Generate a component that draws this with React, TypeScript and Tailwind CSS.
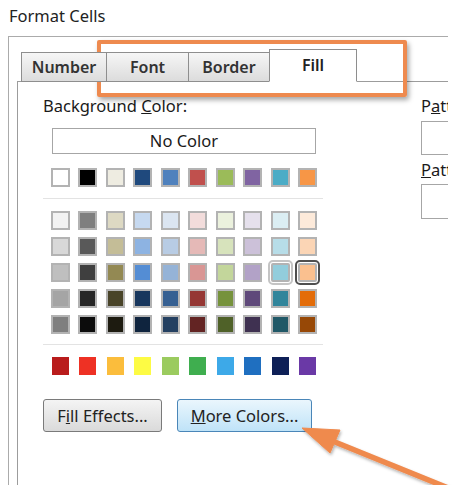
import React from "react";

const themeRow = ["#ffffff", "#000000", "#eeece1", "#1f497d", "#4f81bd", "#c0504d", "#9bbb59", "#8064a2", "#4bacc6", "#f79646"];

const tintRows = [
  ["#f2f2f2", "#7f7f7f", "#ddd9c3", "#c6d9f0", "#dbe5f1", "#f2dcdb", "#ebf1dd", "#e5e0ec", "#dbeef3", "#fdeada"],
  ["#d8d8d8", "#595959", "#c4bd97", "#8db3e2", "#b8cce4", "#e5b9b7", "#d7e3bc", "#ccc1d9", "#b7dde8", "#fbd5b5"],
  ["#bfbfbf", "#3f3f3f", "#938953", "#548dd4", "#95b3d7", "#d99694", "#c3d69b", "#b2a2c7", "#92cddc", "#fac08f"],
  ["#a5a5a5", "#262626", "#494429", "#17365d", "#366092", "#953734", "#76923c", "#5f497a", "#31859b", "#e36c09"],
  ["#7f7f7f", "#0c0c0c", "#1d1b10", "#0f243e", "#244061", "#632423", "#4f6128", "#3f3151", "#205867", "#974806"],
];

const standardRow = ["#b91c1c", "#ee3124", "#fbbd3c", "#fdfb44", "#9bcb5f", "#3fae4f", "#3da9e8", "#1f6fc0", "#0e2057", "#6a39a6"];

// hover / selected markers in the third tint row
function Swatch({ color, mark }: { color: string; mark?: "hover" | "selected" }) {
  let ring = "";
  if (mark === "hover") ring = "outline-2 outline-offset-[1px] outline-[#c4c4c4] rounded-[2px]";
  if (mark === "selected") ring = "outline-2 outline-offset-[1px] outline-[#4f4f4f] rounded-[2px]";
  return (
    <div
      className={`w-[19px] h-[19px] border-2 border-[#b3b3b3] ${ring}`}
      style={{ backgroundColor: color }}
    />
  );
}

function Tab({ label, active, className }: { label: string; active?: boolean; className: string }) {
  if (active) {
    return (
      <div className={`h-[33px] -ml-px border border-[#8e8e8e] border-b-white bg-white flex justify-center pt-[3px] text-[16px] font-semibold text-[#222] ${className}`}>
        {label}
      </div>
    );
  }
  return (
    <div className={`h-[30px] border border-[#8e8e8e] bg-gradient-to-b from-[#f6f6f6] to-[#dcdcdc] flex items-center justify-center text-[16px] font-semibold text-[#333] ${className}`}>
      {label}
    </div>
  );
}

export default function App() {
  return (
    <div className="relative w-[474px] h-[485px] overflow-hidden bg-white text-[#1a1a1a] font-['Noto_Sans','Open_Sans',sans-serif]">
      <div className="h-[36px] pl-[9px] pt-[5px] text-[16.5px] leading-[22px] text-[#222]">Format Cells</div>

      <div className="ml-[8px] w-[440px] h-[449px] border-l border-t border-[#ababab] pl-[8px] pt-[12px] overflow-hidden">
        {/* tab strip */}
        <div className="relative z-10 -mb-px ml-[4px] flex items-end h-[33px]">
          <Tab label="Number" className="w-[86px]" />
          <Tab label="Font" className="w-[83px] -ml-px" />
          <Tab label="Border" className="w-[82px] -ml-px" />
          <Tab label="Fill" active className="w-[88px]" />
        </div>

        {/* tab panel */}
        <div className="h-full border-l border-t border-[#9c9c9c] flex text-[16.5px] leading-[20px]">
          <div className="pl-[25px] pt-[14px] w-[305px] shrink-0">
            <div className="w-[280px]">
              <div>
                Background <span className="underline">C</span>olor:
              </div>
              <div className="mt-[12px] ml-[9px] w-[264px] h-[26px] border border-[#a6a6a6] flex items-center justify-center">
                No Color
              </div>

              <div className="mt-[14px] ml-[8px] w-[266px] flex justify-between">
                {themeRow.map((c, i) => (
                  <Swatch key={i} color={c} />
                ))}
              </div>

              <div className="mt-[11px] h-px bg-[#e3e3e3]" />

              <div className="mt-[12px] ml-[8px] w-[266px] flex flex-col gap-[7px]">
                {tintRows.map((row, r) => (
                  <div key={r} className="flex justify-between">
                    {row.map((c, i) => (
                      <Swatch
                        key={i}
                        color={c}
                        mark={r === 2 && i === 8 ? "hover" : r === 2 && i === 9 ? "selected" : undefined}
                      />
                    ))}
                  </div>
                ))}
              </div>

              <div className="mt-[10px] h-px bg-[#e3e3e3]" />

              <div className="mt-[12px] ml-[9px] w-[264px] flex justify-between">
                {standardRow.map((c, i) => (
                  <div key={i} className="w-[17px] h-[18px]" style={{ backgroundColor: c }} />
                ))}
              </div>

              <div className="mt-[24px] flex gap-[15px]">
                <button className="w-[119px] h-[33px] rounded-[3px] border border-[#7a7a7a] bg-gradient-to-b from-[#f4f4f4] to-[#dadada] text-[16.5px] text-[#222]">
                  F<span className="underline">i</span>ll Effects...
                </button>
                <button className="w-[135px] h-[33px] rounded-[3px] border border-[#4a86b8] bg-gradient-to-b from-[#eaf6fd] to-[#bfe3f8] text-[16.5px] text-[#222]">
                  <span className="underline">M</span>ore Colors...
                </button>
              </div>
            </div>
          </div>

          <div className="ml-[98px] pt-[14px] shrink-0 w-[80px]">
            <div className="whitespace-nowrap">
              P<span className="underline">a</span>ttern Color:
            </div>
            <div className="mt-[5px] w-[80px] h-[34px] border border-[#a6a6a6]" />
            <div className="mt-[5px] whitespace-nowrap">
              <span className="underline">P</span>attern Style:
            </div>
            <div className="mt-[4px] w-[80px] h-[35px] border border-[#a6a6a6]" />
          </div>
        </div>
      </div>

      {/* annotation: highlight around tabs */}
      <div className="absolute left-[97px] top-[40px] w-[310px] h-[57px] border-4 border-[#ee8a4f] rounded-[2px] shadow-[2px_3px_5px_rgba(0,0,0,0.35)]" />

      {/* annotation: arrow pointing at More Colors */}
      <svg className="absolute inset-0 pointer-events-none" width="474" height="485" viewBox="0 0 474 485">
        <defs>
          <filter id="sh" x="-20%" y="-20%" width="140%" height="140%">
            <feDropShadow dx="1" dy="2" stdDeviation="1.5" floodColor="#000" floodOpacity="0.3" />
          </filter>
        </defs>
        <g filter="url(#sh)" fill="#ef8a4e" stroke="#ef8a4e">
          <line x1="330" y1="440" x2="490" y2="505" strokeWidth="5.5" />
          <polygon points="302,428 340,430 330,453" strokeWidth="1" strokeLinejoin="round" />
        </g>
      </svg>
    </div>
  );
}
